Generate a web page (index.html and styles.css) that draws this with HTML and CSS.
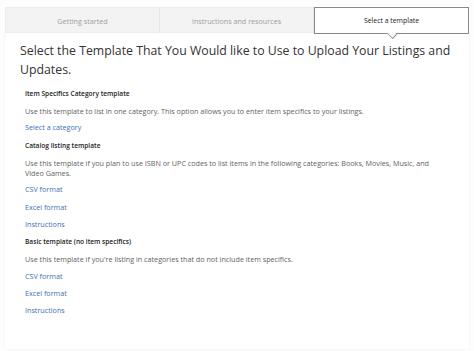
FILE: index.html
```html
<!DOCTYPE html>
<html>
<head>
<meta charset="utf-8">
<link rel="stylesheet" href="styles.css">
</head>
<body>
<div class="page">
  <div class="tabs">
    <div class="tab">Getting started</div>
    <div class="tab">Instructions and resources</div>
    <div class="tab active">Select a template</div>
  </div>
  <div class="panel">
    <h1 class="title">Select the Template That You Would like to Use to Upload Your Listings and Updates.</h1>
    <div class="section">
      <p class="sub">Item Specifics Category template</p>
      <p class="desc">Use this template to list in one category. This option allows you to enter item specifics to your listings.</p>
      <p class="link"><a href="#">Select a category</a></p>
      <p class="sub">Catalog listing template</p>
      <p class="desc">Use this template if you plan to use ISBN or UPC codes to list items in the following categories: Books, Movies, Music, and Video Games.</p>
      <p class="link"><a href="#">CSV format</a></p>
      <p class="link"><a href="#">Excel format</a></p>
      <p class="link"><a href="#">Instructions</a></p>
      <p class="sub">Basic template (no item specifics)</p>
      <p class="desc">Use this template if you're listing in categories that do not include item specifics.</p>
      <p class="link"><a href="#">CSV format</a></p>
      <p class="link"><a href="#">Excel format</a></p>
      <p class="link"><a href="#">Instructions</a></p>
    </div>
  </div>
</div>
</body>
</html>
```
FILE: styles.css
```css
html, body {
  margin: 0;
  padding: 0;
  background: #fdfdfd;
  font-family: "Open Sans", "Liberation Sans", Arial, sans-serif;
}
.page {
  padding: 7px 5px 3px;
}
.tabs {
  display: flex;
  height: 25px;
  background: #f3f3f3;
  border: 1px solid #ececec;
  border-bottom: none;
}
.tab {
  flex: 1;
  display: flex;
  align-items: center;
  justify-content: center;
  font-size: 7.2px;
  color: #a0a0a0;
  border-right: 1px solid #e6e6e6;
}
.tab:last-child { border-right: none; }
.tab.active {
  position: relative;
  background: #fff;
  color: #222;
  font-size: 6.9px;
  border: 1px solid #8a8a8a;
  margin: -1px -1px 0 0;
  height: 25px;
}
.tab.active::after {
  content: "";
  position: absolute;
  left: 50%;
  bottom: -5px;
  width: 7px;
  height: 7px;
  margin-left: -4px;
  background: #fff;
  border-right: 1px solid #8a8a8a;
  border-bottom: 1px solid #8a8a8a;
  transform: rotate(45deg) scaleY(0.75);
}
.panel {
  background: #fff;
  height: 316px;
  box-shadow: 0 0 2px rgba(0,0,0,0.08);
  padding: 8px 12px 0 15px;
  box-sizing: border-box;
}
.title {
  margin: 0;
  font-weight: normal;
  font-size: 12.3px;
  line-height: 19px;
  color: #333;
}
.section {
  padding: 6px 20px 0 5px;
}
.section p {
  margin: 0;
  height: 17.3px;
  line-height: 17.3px;
  font-size: 7.2px;
}
.section p.sub { color: #222; font-weight: 600; font-size: 6.6px; }
.desc { color: #5f5f5f; }
.section p.desc { height: auto; line-height: 10px; padding: 3.6px 0; }
.link a { color: #3d6fb5; text-decoration: none; }
```
